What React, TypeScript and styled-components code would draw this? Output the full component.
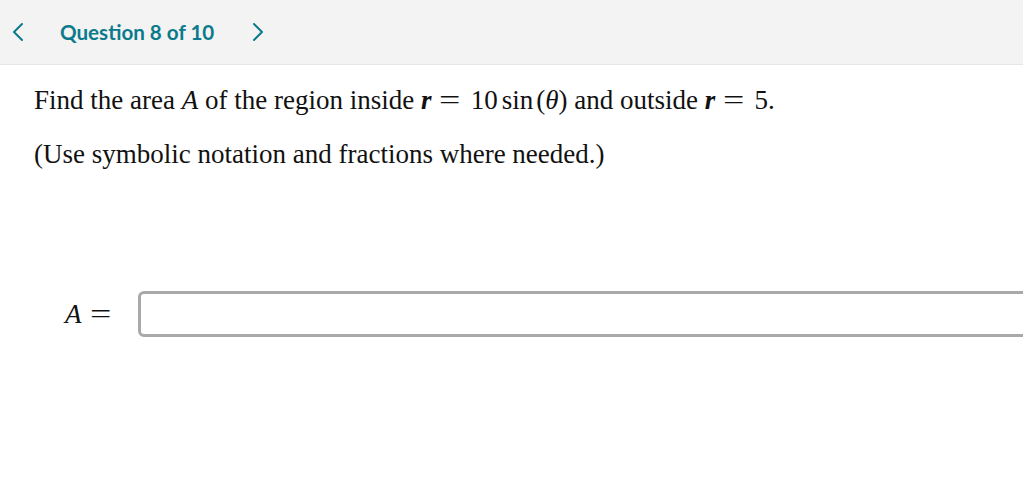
import styled, { createGlobalStyle } from 'styled-components'

const GlobalStyle = createGlobalStyle`
  html, body {
    margin: 0;
    padding: 0;
    background: #ffffff;
    overflow: hidden;
  }
`

const Page = styled.div`
  width: 1023px;
  height: 491px;
  display: flex;
  flex-direction: column;
`

const Header = styled.div`
  height: 65px;
  background: #f3f3f3;
  border-bottom: 1px solid #e6e6e6;
  display: flex;
  align-items: center;
  padding-left: 11px;
  box-sizing: border-box;
`

const NavButton = styled.button`
  border: none;
  background: none;
  padding: 0;
  width: 14px;
  height: 24px;
  display: flex;
  align-items: center;
  justify-content: center;
  color: #0b7a8c;
  cursor: pointer;
`

const HeaderTitle = styled.span`
  font-family: Lato, 'Open Sans', sans-serif;
  font-weight: 700;
  font-size: 20.6px;
  color: #0b7a8c;
  margin: 0 37px 0 35px;
`

const Content = styled.div`
  padding: 19px 34px 0;
  font-family: 'Liberation Serif', 'Times New Roman', serif;
  font-size: 27px;
  color: #111;
`

const Paragraph = styled.p`
  margin: 0 0 21px;
  line-height: 33px;
`

const Var = styled.i<{ $bold?: boolean }>`
  font-style: italic;
  font-weight: ${({ $bold }) => ($bold ? 700 : 400)};
`

const Op = styled.span`
  display: inline-block;
  transform: scaleX(1.4);
  margin: 0 13px 0 11px;
`

const Fn = styled.span`
  margin: 0 3px 0 4px;
`

const AnswerRow = styled.div`
  display: flex;
  align-items: center;
  margin-top: 120px;
  padding-left: 31px;
`

const AnswerLabel = styled.span`
  width: 73px;
  flex-shrink: 0;
`

const AnswerInput = styled.input`
  flex: 1;
  height: 46px;
  margin-right: -40px;
  border: 3px solid #a9a9a9;
  border-radius: 6px;
  box-sizing: border-box;
  outline: none;
  background: #fff;
`

function Chevron({ dir }: { dir: 'left' | 'right' }) {
  return (
    <svg width="12" height="20" viewBox="0 0 12 20" fill="none">
      <path
        d={dir === 'left' ? 'M10 2 L2 10 L10 18' : 'M2 2 L10 10 L2 18'}
        stroke="currentColor"
        strokeWidth="2"
        strokeLinecap="round"
        strokeLinejoin="round"
      />
    </svg>
  )
}

export default function App() {
  return (
    <>
      <GlobalStyle />
      <Page>
        <Header>
          <NavButton aria-label="previous">
            <Chevron dir="left" />
          </NavButton>
          <HeaderTitle>Question 8 of 10</HeaderTitle>
          <NavButton aria-label="next">
            <Chevron dir="right" />
          </NavButton>
        </Header>
        <Content>
          <Paragraph>
            Find the area <Var>A</Var> of the region inside <Var $bold>r</Var>
            <Op>=</Op>10<Fn>sin</Fn>(<Var>θ</Var>) and outside <Var $bold>r</Var>
            <Op>=</Op>5.
          </Paragraph>
          <Paragraph>(Use symbolic notation and fractions where needed.)</Paragraph>
          <AnswerRow>
            <AnswerLabel>
              <Var>A</Var>
              <Op>=</Op>
            </AnswerLabel>
            <AnswerInput />
          </AnswerRow>
        </Content>
      </Page>
    </>
  )
}
